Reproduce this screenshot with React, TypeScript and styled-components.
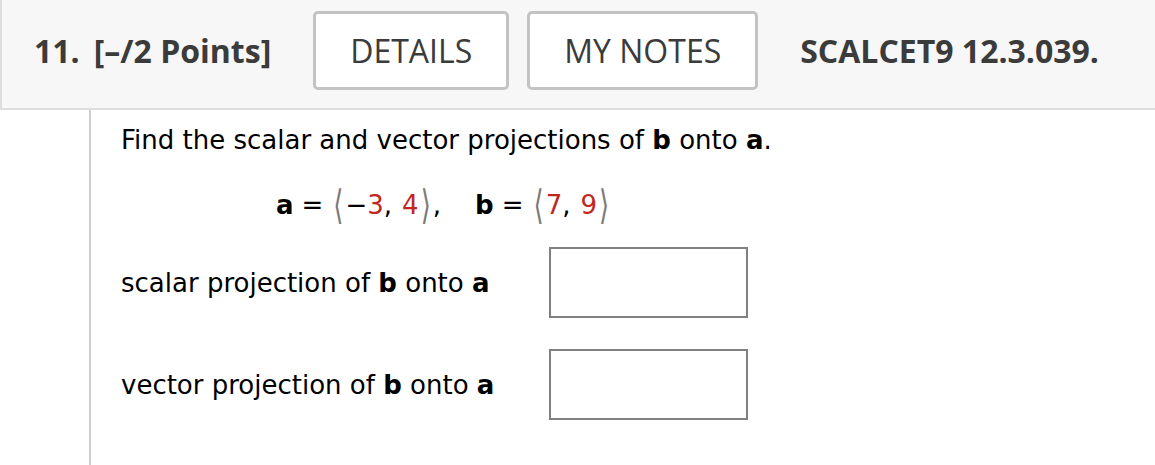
import styled, { createGlobalStyle } from "styled-components";

const GlobalStyle = createGlobalStyle`
  html, body {
    margin: 0;
    padding: 0;
    background: #ffffff;
  }
`;

const Page = styled.div`
  width: 1155px;
  height: 465px;
  overflow: hidden;
  background: #fff;
`;

const Header = styled.div`
  display: flex;
  align-items: center;
  height: 79px;
  padding: 11px 0 18px 32px;
  background: #f7f7f7;
  border-left: 2px solid #dedede;
  border-bottom: 2px solid #dedede;
  font-family: "Open Sans", sans-serif;
  color: #3b3b3b;
  font-size: 32px;
`;

const Num = styled.span`
  font-weight: 700;
  margin-right: 14px;
`;

const Points = styled.span`
  font-weight: 700;
  margin-right: 42px;
`;

const HeadButton = styled.button`
  height: 79px;
  padding: 0 34px;
  margin-right: 18px;
  background: #fff;
  border: 3px solid #c3c3c3;
  border-radius: 5px;
  font-family: "Open Sans", sans-serif;
  font-size: 32px;
  color: #3b3b3b;
  box-sizing: border-box;
`;

const Code = styled.span`
  font-weight: 700;
  margin-left: 24px;
`;

const Body = styled.div`
  margin-left: 89px;
  border-left: 2px solid #cfcfcf;
  padding: 14px 0 0 30px;
  height: 400px;
  font-family: "DejaVu Sans", Verdana, sans-serif;
  font-size: 26px;
  color: #000;
`;

const Prompt = styled.p`
  margin: 0;
  line-height: 32px;
`;

const Equation = styled.div`
  display: flex;
  align-items: center;
  margin: 29px 0 0 155px;
  height: 40px;
`;

const Red = styled.span`
  color: #c0281e;
`;

const Bracket = styled.span`
  display: inline-block;
  color: #7a7a7a;
  transform: scaleY(1.55);
  margin: 0 2px;
`;

const Gap = styled.span<{ w: number }>`
  display: inline-block;
  width: ${(p) => p.w}px;
`;

const AnswerRow = styled.div<{ top: number }>`
  display: flex;
  align-items: center;
  margin-top: ${(p) => p.top}px;
`;

const Label = styled.div`
  width: 428px;
`;

const AnswerBox = styled.input`
  width: 199px;
  height: 71px;
  box-sizing: border-box;
  border: 2px solid #808080;
  background: #fff;
  margin: 0;
  padding: 0;
`;

export default function App() {
  return (
    <Page>
      <GlobalStyle />
      <Header>
        <Num>11.</Num>
        <Points>[–/2 Points]</Points>
        <HeadButton>DETAILS</HeadButton>
        <HeadButton>MY NOTES</HeadButton>
        <Code>SCALCET9 12.3.039.</Code>
      </Header>
      <Body>
        <Prompt>
          Find the scalar and vector projections of <b>b</b> onto <b>a</b>.
        </Prompt>
        <Equation>
          <b>a</b>
          <Gap w={8} />=<Gap w={8} />
          <Bracket>⟨</Bracket>−<Red>3</Red>,<Gap w={10} /><Red>4</Red>
          <Bracket>⟩</Bracket>,<Gap w={34} />
          <b>b</b>
          <Gap w={8} />=<Gap w={8} />
          <Bracket>⟨</Bracket>
          <Red>7</Red>,<Gap w={10} /><Red>9</Red>
          <Bracket>⟩</Bracket>
        </Equation>
        <AnswerRow top={22}>
          <Label>
            scalar projection of <b>b</b> onto <b>a</b>
          </Label>
          <AnswerBox aria-label="scalar projection" />
        </AnswerRow>
        <AnswerRow top={31}>
          <Label>
            vector projection of <b>b</b> onto <b>a</b>
          </Label>
          <AnswerBox aria-label="vector projection" />
        </AnswerRow>
      </Body>
    </Page>
  );
}
